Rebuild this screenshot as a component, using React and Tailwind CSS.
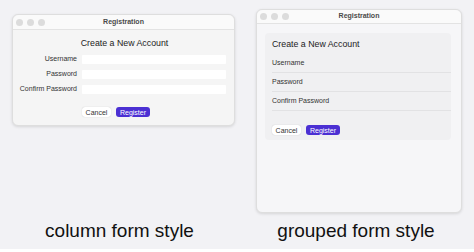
import React from "react";

const font = { fontFamily: "'Liberation Sans', Arial, sans-serif" };

// traffic lights, greyed out (inactive window)
const Lights = () => (
  <div className="flex items-center gap-[4px]">
    <span className="w-[7px] h-[7px] rounded-full bg-[#dcdcdc]" />
    <span className="w-[7px] h-[7px] rounded-full bg-[#dcdcdc]" />
    <span className="w-[7px] h-[7px] rounded-full bg-[#dcdcdc]" />
  </div>
);

const TitleBar = ({ height }) => (
  <div
    className={`relative flex items-center px-[3px] border-b border-[#e3e3e3] bg-[#fafafa] rounded-t-[6px] ${height}`}
  >
    <Lights />
    <span className="absolute inset-0 flex items-center justify-center text-[7px] font-bold text-[#4a4a4a]">
      Registration
    </span>
  </div>
);

const Buttons = () => (
  <div className="flex items-center gap-[5px]">
    <button className="w-[29px] h-[10px] rounded-[3px] bg-white shadow-[0_0_1px_rgba(0,0,0,0.25)] text-[7px] leading-none text-[#333]">
      Cancel
    </button>
    <button className="w-[34px] h-[10px] rounded-[3px] bg-[#4b30d3] text-[7px] leading-none text-white">
      Register
    </button>
  </div>
);

const ColumnForm = () => (
  <div className="w-[223px] h-[112px] rounded-[6px] bg-[#f5f5f5] border border-[#dedede] shadow-[0_1px_3px_rgba(0,0,0,0.12)] flex flex-col">
    <TitleBar height="h-[15px]" />
    <p className="pt-[7px] pl-[2px] text-center text-[8.8px] leading-[12px] text-[#222]">
      Create a New Account
    </p>
    <div className="mt-[6px] grid grid-cols-[64px_144px] gap-x-[5px] gap-y-[6px]">
      {["Username", "Password", "Confirm Password"].map((label) => (
        <React.Fragment key={label}>
          <span className="h-[9px] flex items-center justify-end text-[7px] text-[#333] whitespace-nowrap">
            {label}
          </span>
          <div className="h-[9px] bg-white rounded-[1px]" />
        </React.Fragment>
      ))}
    </div>
    <div className="mt-[13px] pl-[69px]">
      <Buttons />
    </div>
  </div>
);

const GroupedForm = () => (
  <div className="w-[206px] h-[204px] rounded-[6px] bg-[#f6f6f8] border border-[#dedede] shadow-[0_1px_3px_rgba(0,0,0,0.12)] flex flex-col">
    <TitleBar height="h-[14px]" />
    <div className="mt-[9px] ml-[8px] mr-[10px] rounded-[4px] bg-[#f0f0f2] pl-[7px] pt-[5px] pb-[5px]">
      <p className="text-[8.8px] leading-[12px] text-[#222]">Create a New Account</p>
      <div className="mt-[4px]">
        {["Username", "Password", "Confirm Password"].map((label) => (
          <div
            key={label}
            className="h-[19px] flex items-center border-b border-[#e2e2e4] text-[7px] text-[#333]"
          >
            {label}
          </div>
        ))}
      </div>
      <div className="mt-[14px]">
        <Buttons />
      </div>
    </div>
  </div>
);

export default function App() {
  return (
    <div
      className="w-[474px] h-[252px] bg-[#f2f2f5] flex border-b-[3px] border-white overflow-hidden"
      style={font}
    >
      <div className="ml-[12px] w-[223px] pt-[14px] flex flex-col">
        <ColumnForm />
        <p className="mt-auto mb-[6px] pr-[8px] text-center text-[19px] leading-[24px] text-[#111]">
          column form style
        </p>
      </div>
      <div className="ml-[21px] w-[206px] pt-[9px] flex flex-col">
        <GroupedForm />
        <p className="mt-auto mb-[6px] pr-[6px] text-center text-[19px] leading-[24px] text-[#111]">
          grouped form style
        </p>
      </div>
    </div>
  );
}
